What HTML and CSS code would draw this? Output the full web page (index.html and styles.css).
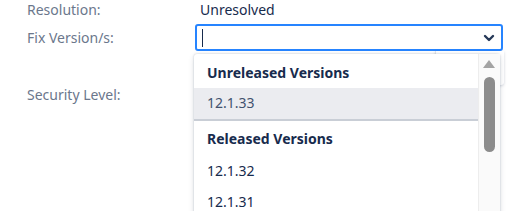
FILE: index.html
```html
<!DOCTYPE html>
<html>
<head>
<meta name="viewport" content="width=device-width, initial-scale=1">
<link rel="stylesheet" href="styles.css">
<title>Edit Issue</title>
</head>
<body>

<div class="form">
    <div class="row row-resolution">
        <div class="label">Resolution:</div>
        <div class="value">Unresolved</div>
    </div>

    <div class="row row-version">
        <div class="label">Fix Version/s:</div>
        <div class="field">
            <div class="picker">
                <span class="caret"></span>
                <svg class="chevron" width="12" height="8" viewBox="0 0 12 8">
                    <polyline points="2,2 6,6 10,2" fill="none" stroke="#253858" stroke-width="2.4" stroke-linecap="round" stroke-linejoin="round"/>
                </svg>
            </div>
            <div class="behind"></div>
            <div class="menu">
                <div class="menu-list">
                    <div class="group">Unreleased Versions</div>
                    <div class="item active">12.1.33</div>
                    <div class="group split">Released Versions</div>
                    <div class="item">12.1.32</div>
                    <div class="item">12.1.31</div>
                </div>
                <div class="scrollbar">
                    <div class="arrow"></div>
                    <div class="thumb"></div>
                </div>
            </div>
        </div>
    </div>

    <div class="row row-security">
        <div class="label">Security Level:</div>
    </div>
</div>

</body>
</html>
```

FILE: styles.css
```css
html, body {
    height: 211px;
}

body {
    margin: 0;
    background-color: #ffffff;
    font-family: "Noto Sans", "Open Sans", sans-serif;
    font-size: 14px;
    color: #172b4d;
    overflow: hidden;
}

.form {
    padding-left: 27px;
    height: 211px;
    overflow: hidden;
}

.row {
    display: grid;
    grid-template-columns: 168px 1fr;
    align-items: center;
}

.label {
    color: #6b778c;
    line-height: 20px;
}

.row-resolution {
    height: 20px;
}

.value {
    padding-left: 5px;
    line-height: 20px;
}

.row-version {
    margin-top: 4px;
    height: 27px;
}

.row-security {
    margin-top: 34px;
}

.field {
    position: relative;
    width: 308px;
}

.picker {
    height: 23px;
    border: 2px solid #2684ff;
    border-radius: 3px;
    display: flex;
    align-items: center;
    justify-content: space-between;
    padding: 0 6px 0 5px;
}

.caret {
    width: 1px;
    height: 18px;
    background-color: #172b4d;
}

.chevron {
    display: block;
}

.behind {
    position: absolute;
    top: 27px;
    left: 240px;
    width: 68px;
    height: 34px;
    background: #ffffff;
    border-left: 1px solid #e3e5e8;
    box-shadow: 0 1px 3px rgba(9, 30, 66, 0.18);
    border-radius: 0 0 3px 3px;
}

.menu {
    position: absolute;
    top: 30px;
    left: -1px;
    width: 306px;
    height: 170px;
    background: #ffffff;
    border-radius: 3px 3px 0 0;
    box-shadow: 0 0 2px rgba(9, 30, 66, 0.25), 0 2px 6px rgba(9, 30, 66, 0.12);
    display: flex;
}

.menu-list {
    flex: 1;
}

.group {
    font-weight: 700;
    padding-left: 13px;
    height: 34px;
    line-height: 38px;
    color: #172b4d;
}

.group.split {
    border-top: 2px solid #c9ced6;
    height: 34px;
    line-height: 35px;
}

.item {
    padding-left: 13px;
    height: 31px;
    line-height: 31px;
    color: #172b4d;
}

.item.active {
    background-color: #ebecf0;
    color: #42526e;
    line-height: 30px;
}

.scrollbar {
    width: 21px;
    background: #fafafa;
    border-left: 1px solid #ededed;
    position: relative;
}

.arrow {
    position: absolute;
    top: 6px;
    left: 4px;
    width: 0;
    height: 0;
    border-left: 6px solid transparent;
    border-right: 6px solid transparent;
    border-bottom: 8px solid #a3a3a3;
}

.thumb {
    position: absolute;
    top: 23px;
    left: 5px;
    width: 11px;
    height: 75px;
    background: #8c8c8c;
    border-radius: 6px;
}
```
